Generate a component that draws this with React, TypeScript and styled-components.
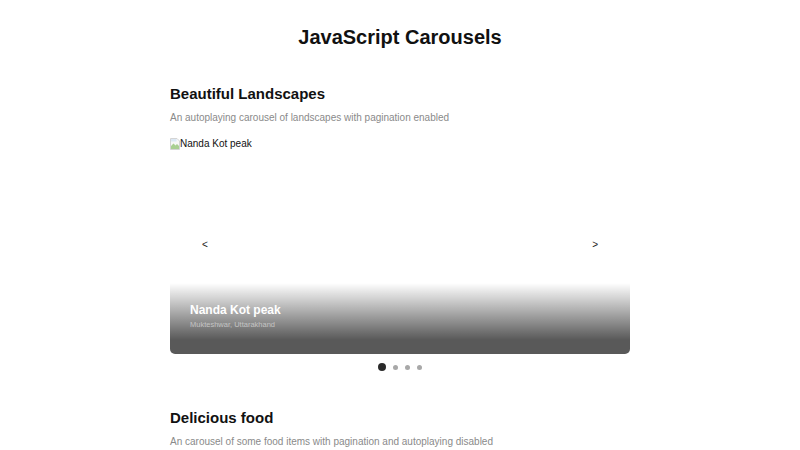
import styled, { createGlobalStyle } from 'styled-components';

const GlobalStyle = createGlobalStyle`
    body {
        margin: 0;
        background: #fff;
        font-family: 'Liberation Sans', Arial, sans-serif;
        color: #111;
    }
`;

const slides = [
    { title: 'Nanda Kot peak', place: 'Mukteshwar, Uttarakhand' },
    { title: 'Valley of Flowers', place: 'Chamoli, Uttarakhand' },
    { title: 'Pangong Lake', place: 'Leh, Ladakh' },
    { title: 'Dal Lake', place: 'Srinagar, Kashmir' },
];

// browser-style placeholder for an image that failed to load
const BrokenImageIcon = () => (
    <svg width="10" height="12" viewBox="0 0 10 12">
        <path d="M0.5 0.5h6.5l2.5 2.5v8.5h-9z" fill="#f7f7f7" stroke="#d4d4d4" />
        <path d="M1 8l2.5-2.5 2 2 1.5-1.5 2 2v3H1z" fill="#a9cf92" />
        <path d="M1 1h5.5v2.5H1z" fill="#dbe8f5" />
    </svg>
);

const App = () => {
    const active = 0;
    const slide = slides[active];

    return (
        <>
            <GlobalStyle />
            <Page>
                <Title>JavaScript Carousels</Title>

                <Section>
                    <SectionTitle>Beautiful Landscapes</SectionTitle>
                    <SectionText>An autoplaying carousel of landscapes with pagination enabled</SectionText>
                    <Carousel>
                        <BrokenImage>
                            <BrokenImageIcon />
                            {slide.title}
                        </BrokenImage>
                        <Arrow side="left">&lt;</Arrow>
                        <Arrow side="right">&gt;</Arrow>
                        <Caption>
                            <CaptionTitle>{slide.title}</CaptionTitle>
                            <CaptionText>{slide.place}</CaptionText>
                        </Caption>
                    </Carousel>
                    <Dots>
                        {slides.map((s, i) => (
                            <Dot key={s.title} active={i === active} />
                        ))}
                    </Dots>
                </Section>

                <Section>
                    <SectionTitle>Delicious food</SectionTitle>
                    <SectionText>An carousel of some food items with pagination and autoplaying disabled</SectionText>
                </Section>
            </Page>
        </>
    );
};

const Page = styled.div`
    width: 460px;
    margin: 0 auto;
    padding-top: 25px;
`;

const Title = styled.h1`
    margin: 0 0 35px;
    text-align: center;
    font-size: 20px;
    line-height: 24px;
    font-weight: 700;
`;

const Section = styled.section`
    display: flex;
    flex-direction: column;
    margin-bottom: 37px;
`;

const SectionTitle = styled.h2`
    margin: 0;
    font-size: 15px;
    line-height: 20px;
    font-weight: 700;
`;

const SectionText = styled.p`
    margin: 8px 0 12px;
    font-size: 10px;
    line-height: 12px;
    color: #8a8a8a;
`;

const Carousel = styled.div`
    position: relative;
    height: 218px;
    border-radius: 0 0 5px 5px;
    overflow: hidden;
`;

const BrokenImage = styled.div`
    display: flex;
    align-items: center;
    padding-top: 2px;
    font-size: 10px;
    line-height: 12px;
    color: #111;
    svg {
        flex-shrink: 0;
    }
`;

const Arrow = styled.span<{ side: 'left' | 'right' }>`
    position: absolute;
    top: 103px;
    ${({ side }) => (side === 'left' ? 'left: 32px;' : 'right: 32px;')}
    font-size: 10px;
    line-height: 12px;
    color: #222;
`;

const Caption = styled.div`
    position: absolute;
    left: 0;
    right: 0;
    bottom: 0;
    height: 71px;
    padding: 20px 20px 0;
    box-sizing: border-box;
    display: flex;
    flex-direction: column;
    gap: 3px;
    background: linear-gradient(to bottom, rgba(0, 0, 0, 0) 0%, rgba(0, 0, 0, 0.65) 80%, rgba(0, 0, 0, 0.65) 100%);
`;

const CaptionTitle = styled.div`
    font-size: 12px;
    line-height: 14px;
    font-weight: 700;
    color: #fff;
`;

const CaptionText = styled.div`
    font-size: 7.5px;
    line-height: 10px;
    color: #c4c4c4;
`;

const Dots = styled.div`
    display: flex;
    justify-content: center;
    align-items: center;
    gap: 7px;
    margin-top: 9px;
    height: 8px;
`;

const Dot = styled.span<{ active: boolean }>`
    width: ${({ active }) => (active ? 8 : 5)}px;
    height: ${({ active }) => (active ? 8 : 5)}px;
    border-radius: 50%;
    background: ${({ active }) => (active ? '#2a2a2a' : '#a8a8a8')};
`;

export default App;
